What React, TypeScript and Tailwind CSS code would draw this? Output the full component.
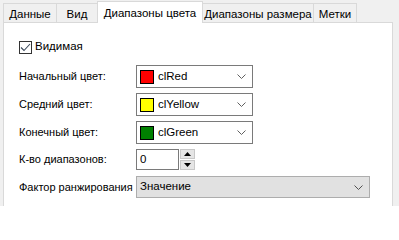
import React from 'react';

const FONT = { fontFamily: '"Liberation Sans", Arial, sans-serif' };

const Chevron: React.FC<{ color?: string }> = ({ color = '#606060' }) => (
  <svg width="9" height="5" viewBox="0 0 9 5" fill="none">
    <polyline points="0.5,0.5 4.5,4.5 8.5,0.5" stroke={color} strokeWidth="1" />
  </svg>
);

const ColorCombo: React.FC<{ color: string; name: string }> = ({ color, name }) => (
  <div className="w-[117px] h-[23px] border border-[#7a7a7a] bg-white flex items-center pl-[3px] pr-[6px]">
    <div className="w-[14px] h-[14px] border border-black" style={{ backgroundColor: color }} />
    <span className="ml-[4px] flex-1 leading-none text-[11.5px]">{name}</span>
    <Chevron />
  </div>
);

const Row: React.FC<{ label: string; children: React.ReactNode; className?: string }> = ({ label, children, className = '' }) => (
  <div className={`flex items-center ${className}`}>
    <div className="w-[117px] shrink-0 whitespace-nowrap">{label}</div>
    {children}
  </div>
);

const TABS = [
  { label: 'Данные', w: 'w-[54px]' },
  { label: 'Вид', w: 'w-[42px]' },
  { label: 'Диапазоны цвета', w: 'w-[106px]', active: true },
  { label: 'Диапазоны размера', w: 'w-[112px]' },
  { label: 'Метки', w: 'w-[44px]' },
];

export default function App() {
  return (
    <div className="w-[399px] h-[206px] bg-[#f0f0f0] overflow-hidden pl-[3px] pr-[6px] text-[11px] text-black" style={FONT}>
      <div className="relative z-10 flex items-end h-[22px] text-[11.5px]">
        {TABS.map((t, i) =>
          t.active ? (
            <div key={t.label} className={`${t.w} -ml-px h-[22px] -mb-px bg-white border border-b-0 border-[#d9d9d9] flex justify-center pt-[3px] whitespace-nowrap`}>
              {t.label}
            </div>
          ) : (
            <div key={t.label} className={`${t.w} ${i > 0 ? '-ml-px' : ''} h-[19px] bg-[#f0f0f0] border border-b-0 border-[#d9d9d9] flex justify-center pt-[2px] whitespace-nowrap`}>
              {t.label}
            </div>
          )
        )}
      </div>
      <div className="h-[200px] bg-white border border-[#d9d9d9] pl-[14px] pt-[17px]">
        <div className="flex items-center h-[14px] ml-[1px]">
          <div className="w-[13px] h-[13px] border border-[#333333] bg-white flex items-center justify-center">
            <svg width="11" height="9" viewBox="0 0 11 9" fill="none">
              <polyline points="1,4.5 4,7.5 10,1" stroke="#3b4a5c" strokeWidth="1.1" />
            </svg>
          </div>
          <span className="ml-[3px] leading-none text-[11.5px]">Видимая</span>
        </div>

        <div className="mt-[11px] flex flex-col ml-[1px]">
          <Row label="Начальный цвет:">
            <ColorCombo color="#ff0000" name="clRed" />
          </Row>
          <Row label="Средний цвет:" className="mt-[5px]">
            <ColorCombo color="#ffff00" name="clYellow" />
          </Row>
          <Row label="Конечный цвет:" className="mt-[5px]">
            <ColorCombo color="#008000" name="clGreen" />
          </Row>
          <Row label="К-во диапазонов:" className="mt-[5px]">
            <div className="flex items-center">
              <div className="w-[43px] h-[21px] border border-[#7a7a7a] bg-white flex items-center pl-[3px] text-[11.5px]">0</div>
              <div className="ml-[1px] flex flex-col">
                <div className="w-[15px] h-[10px] bg-[#e5e5e5] border border-[#c8c8c8] flex items-center justify-center">
                  <svg width="7" height="4" viewBox="0 0 7 4"><polygon points="3.5,0 7,4 0,4" fill="#000" /></svg>
                </div>
                <div className="w-[15px] h-[10px] mt-[1px] bg-[#e5e5e5] border border-[#c8c8c8] flex items-center justify-center">
                  <svg width="7" height="4" viewBox="0 0 7 4"><polygon points="0,0 7,0 3.5,4" fill="#000" /></svg>
                </div>
              </div>
            </div>
          </Row>
          <Row label="Фактор ранжирования" className="mt-[6px]">
            <div className="w-[234px] h-[22px] border border-[#adadad] bg-[#e1e1e1] flex items-center pl-[3px] pr-[6px]">
              <span className="flex-1 text-[11.5px]">Значение</span>
              <Chevron color="#505050" />
            </div>
          </Row>
        </div>
      </div>
    </div>
  );
}
